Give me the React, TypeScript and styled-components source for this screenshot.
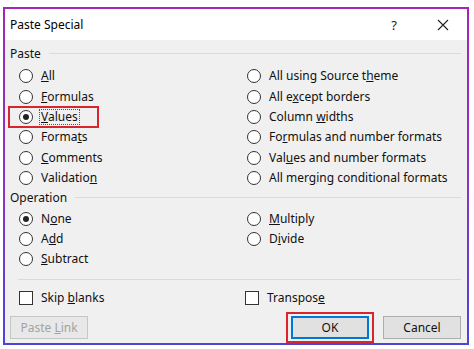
import React from "react";
import styled, { createGlobalStyle } from "styled-components";

const GlobalStyle = createGlobalStyle`
    html, body {
        margin: 0;
        padding: 0;
        background: #ffffff;
    }
    body {
        font-family: "Noto Sans", "Open Sans", Arial, sans-serif;
        font-size: 12px;
        color: #111;
    }
`;

const pasteLeft = [
    { label: "All", key: 0 },
    { label: "Formulas", key: 0 },
    { label: "Values", key: 0, checked: true, highlight: true },
    { label: "Formats", key: 5 },
    { label: "Comments", key: 0 },
    { label: "Validation", key: 9 },
];

const pasteRight = [
    { label: "All using Source theme", key: 18 },
    { label: "All except borders", key: 5 },
    { label: "Column widths", key: 7 },
    { label: "Formulas and number formats", key: 2 },
    { label: "Values and number formats", key: 3 },
    { label: "All merging conditional formats", key: 7 },
];

const opLeft = [
    { label: "None", key: 1, checked: true },
    { label: "Add", key: 1 },
    { label: "Subtract", key: 0 },
];

const opRight = [
    { label: "Multiply", key: 0 },
    { label: "Divide", key: 1 },
];

const Mnemonic = ({ text, at }: { text: string; at: number }) => (
    <>
        {text.slice(0, at)}
        <u>{text[at]}</u>
        {text.slice(at + 1)}
    </>
);

const Radio = ({ item }: { item: any }) => (
    <RadioRow>
        <Circle checked={!!item.checked} />
        <Label focused={!!item.highlight}>
            <Mnemonic text={item.label} at={item.key} />
        </Label>
        {item.highlight && <Highlight />}
    </RadioRow>
);

const Check = ({ label, at }: { label: string; at: number }) => (
    <CheckItem>
        <Box />
        <span>
            <Mnemonic text={label} at={at} />
        </span>
    </CheckItem>
);

const App = () => {
    return (
        <>
            <GlobalStyle />
            <Frame>
                <TitleBar>
                    <Title>Paste Special</Title>
                    <TitleButtons>
                        <Help>?</Help>
                        <svg width="12" height="12" viewBox="0 0 12 12">
                            <path
                                d="M1 1 L11 11 M11 1 L1 11"
                                stroke="#222"
                                strokeWidth="1.1"
                            />
                        </svg>
                    </TitleButtons>
                </TitleBar>
                <Body>
                    <GroupHeader>
                        <span>Paste</span>
                        <Rule />
                    </GroupHeader>
                    <Options top={5}>
                        <Column>
                            {pasteLeft.map(item => (
                                <Radio key={item.label} item={item} />
                            ))}
                        </Column>
                        <Column>
                            {pasteRight.map(item => (
                                <Radio key={item.label} item={item} />
                            ))}
                        </Column>
                    </Options>
                    <GroupHeader>
                        <span>Operation</span>
                        <Rule />
                    </GroupHeader>
                    <Options top={3}>
                        <Column>
                            {opLeft.map(item => (
                                <Radio key={item.label} item={item} />
                            ))}
                        </Column>
                        <Column>
                            {opRight.map(item => (
                                <Radio key={item.label} item={item} />
                            ))}
                        </Column>
                    </Options>
                    <Separator />
                    <CheckRow>
                        <Check label="Skip blanks" at={5} />
                        <Check label="Transpose" at={8} />
                    </CheckRow>
                    <ButtonRow>
                        <Button disabled>
                            <Mnemonic text="Paste Link" at={6} />
                        </Button>
                        <OkWrap>
                            <Button primary>OK</Button>
                        </OkWrap>
                        <Button>Cancel</Button>
                    </ButtonRow>
                </Body>
            </Frame>
        </>
    );
};

const Frame = styled.div`
    margin: 7px 0 0 3px;
    width: 462px;
    height: 334px;
    border: 2px solid;
    border-image: linear-gradient(#a526b4, #8a34c4 55%, #4b44d6) 1;
    background: #f0f0f0;
    display: flex;
    flex-direction: column;
    overflow: hidden;
`;

const TitleBar = styled.div`
    height: 31px;
    background: #ffffff;
    display: flex;
    align-items: center;
    justify-content: space-between;
    padding: 0 18px 0 5px;
    flex-shrink: 0;
`;

const Title = styled.span`
    font-size: 12px;
    color: #000;
`;

const TitleButtons = styled.div`
    display: flex;
    align-items: center;
    gap: 40px;
`;

const Help = styled.span`
    font-size: 13px;
    color: #222;
`;

const Body = styled.div`
    display: flex;
    flex-direction: column;
    padding: 6px 0 0 5px;
    flex: 1;
`;

const GroupHeader = styled.div`
    display: flex;
    align-items: center;
    gap: 8px;
    height: 15px;
    padding-right: 6px;
`;

const Rule = styled.div`
    flex: 1;
    height: 1px;
    background: #dadada;
`;

const Options = styled.div<{ top: number }>`
    display: grid;
    grid-template-columns: 228px 1fr;
    padding: ${props => props.top}px 0 2px 9px;
`;

const Column = styled.div`
    display: flex;
    flex-direction: column;
`;

const RadioRow = styled.div`
    position: relative;
    display: flex;
    align-items: center;
    height: 20.4px;
    gap: 7px;
`;

const Circle = styled.span<{ checked: boolean }>`
    width: 12px;
    height: 12px;
    border-radius: 50%;
    border: 1px solid #333;
    background: #fff;
    display: flex;
    align-items: center;
    justify-content: center;
    flex-shrink: 0;

    &::after {
        content: "";
        width: 6px;
        height: 6px;
        border-radius: 50%;
        background: ${props => (props.checked ? "#222" : "transparent")};
    }
`;

const Label = styled.span<{ focused: boolean }>`
    white-space: nowrap;
    padding: 0 1px;
    outline: ${props => (props.focused ? "1px dotted #555" : "none")};
    line-height: 14px;
`;

const Highlight = styled.span`
    position: absolute;
    left: -11px;
    top: -1px;
    width: 87px;
    height: 18px;
    border: 2px solid #d7262e;
    pointer-events: none;
`;

const Separator = styled.div`
    height: 1px;
    background: #dadada;
    margin: 7px 6px 0 8px;
`;

const CheckRow = styled.div`
    display: grid;
    grid-template-columns: 226px 1fr;
    padding: 10px 0 0 9px;
`;

const CheckItem = styled.div`
    display: flex;
    align-items: center;
    gap: 8px;
    height: 16px;
`;

const Box = styled.span`
    width: 12px;
    height: 12px;
    border: 1px solid #333;
    background: #fff;
    flex-shrink: 0;
`;

const ButtonRow = styled.div`
    display: flex;
    align-items: center;
    margin-top: 6px;
    padding-right: 6px;
`;

const Button = styled.button<{ primary?: boolean }>`
    font-family: inherit;
    font-size: 12px;
    width: 78px;
    height: 23px;
    padding: 0;
    background: ${props => (props.disabled ? "#e8e8e8" : "#e1e1e1")};
    color: ${props => (props.disabled ? "#a3a3a3" : "#111")};
    border: 1px solid
        ${props =>
            props.primary ? "#0078d7" : props.disabled ? "#c6c6c6" : "#adadad"};
    box-shadow: ${props => (props.primary ? "inset 0 0 0 1px #0078d7" : "none")};
`;

const OkWrap = styled.div`
    margin-left: auto;
    margin-right: 9px;
    border: 2px solid #d7262e;
    padding: 2px 3px;
    display: flex;
`;

export default App;
